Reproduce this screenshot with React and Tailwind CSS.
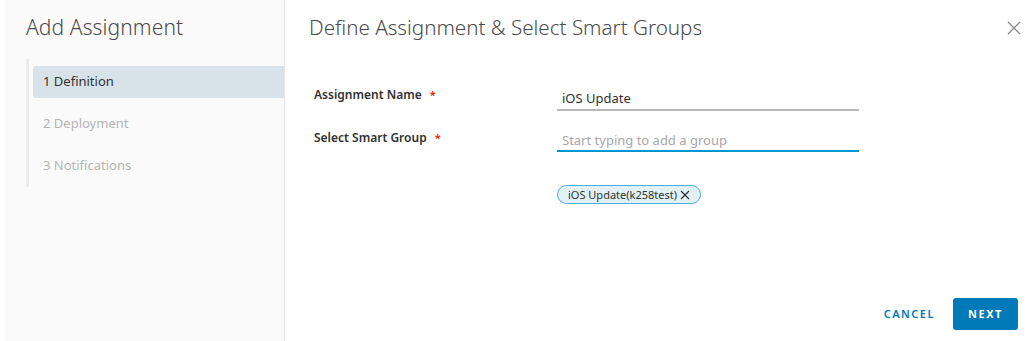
import React from "react";

export default function App() {
  const font = { fontFamily: '"Noto Sans", "Open Sans", Arial, sans-serif' };
  return (
    <div className="w-[1033px] h-[341px] bg-white flex overflow-hidden text-[#313131]" style={font}>
      <div className="w-[5px] shrink-0 bg-white" />
      <aside className="w-[280px] shrink-0 bg-[#fafafa] border-r border-[#e8e8e8] flex flex-col">
        <h1 className="pl-[21px] pt-[12px] text-[21px] font-light text-[#4a4a4a] leading-[30px] tracking-[0.1px]">Add Assignment</h1>
        <div className="mt-[17px] ml-[21px] border-l-[3px] border-[#ececec] flex flex-col pt-[7px] pb-0">
          <div className="ml-[4px] h-[32px] bg-[#d8e3e9] rounded-l-[3px] flex items-center pl-[10px] text-[13px] text-[#313131]">1 Definition</div>
          <div className="ml-[4px] mt-[5px] h-[42px] flex items-center pl-[10px] text-[13px] text-[#b5b5b5]">2 Deployment</div>
          <div className="ml-[4px] h-[42px] flex items-center pl-[10px] text-[13px] text-[#b5b5b5]">3 Notifications</div>
        </div>
      </aside>
      <main className="flex-1 flex flex-col relative">
        <div className="flex items-start justify-between pl-[24px] pr-[12px] pt-[12px]">
          <h2 className="text-[20.6px] font-light text-[#4a4a4a] leading-[30px]">Define Assignment &amp; Select Smart Groups</h2>
          <svg width="14" height="14" viewBox="0 0 14 14" className="mt-[9px]">
            <path d="M1 1 L13 13 M13 1 L1 13" stroke="#8a8a8a" strokeWidth="1.3" fill="none" />
          </svg>
        </div>
        <div className="pl-[29px] pt-[41px] flex flex-col">
          <div className="flex items-start">
            <div className="w-[243px] text-[12px] font-semibold text-[#313131] pt-[4px] leading-[16px]">
              Assignment Name <span className="text-[#e12200] ml-[5px] text-[11px] align-top">*</span>
            </div>
            <div className="w-[302px] border-b-2 border-[#b8b8b8] h-[28px] pt-[8px] pl-[5px] text-[13px] leading-[14px] text-[#313131]">iOS Update</div>
          </div>
          <div className="flex items-start mt-[14px]">
            <div className="w-[243px] text-[12px] font-semibold text-[#313131] pt-[5px] leading-[16px]">
              Select Smart Group <span className="text-[#e12200] ml-[5px] text-[11px] align-top">*</span>
            </div>
            <div className="w-[302px] border-b-2 border-[#0095d3] h-[27px] pt-[8px] pl-[5px] text-[13px] leading-[14px] text-[#a8a8a8]">Start typing to add a group</div>
          </div>
          <div className="flex mt-[33px] pl-[243px]">
            <div className="h-[19px] px-[10px] rounded-full border border-[#49afd9] bg-[#e1f1f6] flex items-center gap-[3px] text-[11px] text-[#313131] leading-none">
              iOS Update(k258test)
              <svg width="10" height="10" viewBox="0 0 10 10">
                <path d="M1 1 L9 9 M9 1 L1 9" stroke="#313131" strokeWidth="1.2" fill="none" />
              </svg>
            </div>
          </div>
        </div>
        <div className="mt-auto flex justify-end items-center pr-[15px] pb-[11px] gap-[18px]">
          <button className="h-[32px] text-[11px] font-semibold tracking-[1.5px] text-[#0079b8]">CANCEL</button>
          <button className="h-[32px] w-[65px] rounded-[3px] bg-[#0079b8] text-white text-[11px] font-bold tracking-[1.5px]">NEXT</button>
        </div>
      </main>
    </div>
  );
}
